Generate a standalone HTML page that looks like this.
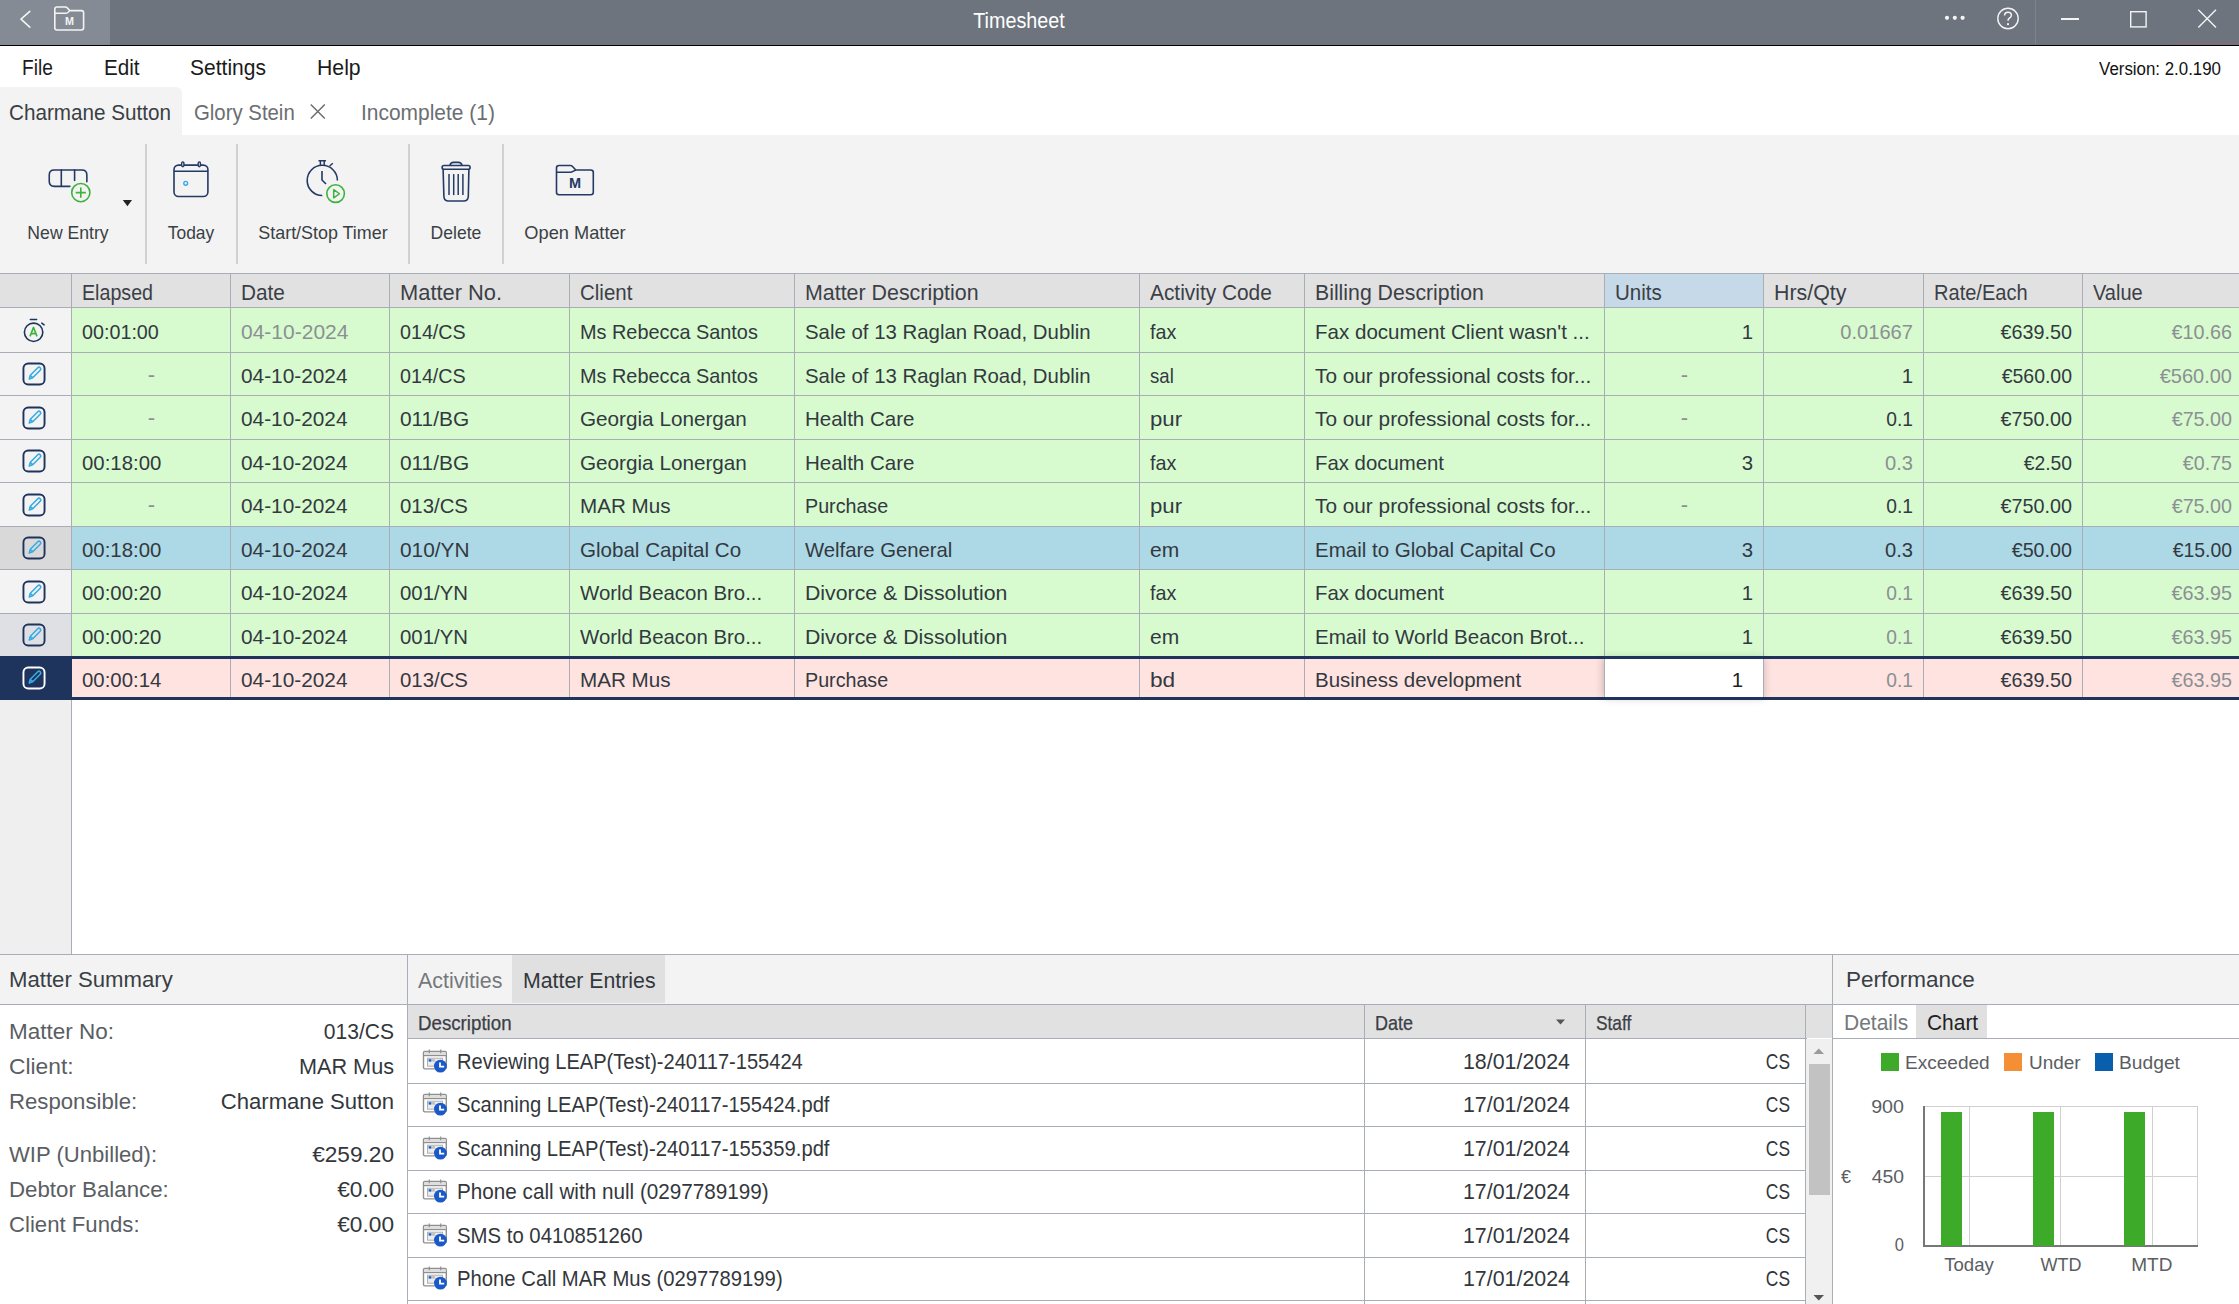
<!DOCTYPE html>
<html><head><meta charset="utf-8"><title>Timesheet</title>
<style>
html,body{margin:0;padding:0;}
body{width:2239px;height:1304px;overflow:hidden;position:relative;background:#fff;font-family:'Liberation Sans', sans-serif;}
div,svg{box-sizing:border-box;}
</style></head><body>
<div style="position:absolute;left:0px;top:0px;width:2239px;height:45px;background:#6d747e;"></div>
<div style="position:absolute;left:0px;top:0px;width:110px;height:45px;background:#858b94;"></div>
<div style="position:absolute;left:0px;top:45px;width:2239px;height:1px;background:#000;"></div>
<svg style="position:absolute;left:14px;top:4px;" width="24" height="32" viewBox="0 0 24 32" fill="none"><path d="M15.8 7.3 L7 15.2 L15.8 23.2" stroke="#f4f4f4" stroke-width="1.6" stroke-linecap="round" stroke-linejoin="round"/></svg>
<svg style="position:absolute;left:50px;top:2px;" width="40" height="34" viewBox="0 0 40 34" fill="none"><path d="M4.8 7.2 Q4.8 5 7 5 L15.5 5 Q16.5 5 17.2 5.7 L19.7 8.6 L31.4 8.6 Q33.6 8.6 33.6 10.8 L33.6 25.8 Q33.6 28 31.4 28 L7 28 Q4.8 28 4.8 25.8 Z" stroke="#f4f4f4" stroke-width="1.6" stroke-linejoin="round"/><path d="M4.8 11.3 L15.5 11.3 Q17 11.3 18.2 10.2 L19.7 8.6" stroke="#f4f4f4" stroke-width="1.4"/><text x="19.5" y="22.7" fill="#f4f4f4" font-family="Liberation Sans" font-weight="bold" font-size="10.8" text-anchor="middle">M</text></svg>
<div style="position:absolute;left:419.0px;width:1200px;text-align:center;top:9.54px;font-size:21.80232558139535px;line-height:21.80232558139535px;color:#ffffff;font-weight:normal;white-space:pre;transform:scaleX(0.9062);transform-origin:center center;">Timesheet</div>
<svg style="position:absolute;left:1940px;top:10px;" width="30" height="16" viewBox="0 0 30 16" fill="none"><circle cx="7.0" cy="7.8" r="2.1" fill="#f4f4f4"/><circle cx="14.8" cy="7.8" r="2.1" fill="#f4f4f4"/><circle cx="22.6" cy="7.8" r="2.1" fill="#f4f4f4"/></svg>
<svg style="position:absolute;left:1994px;top:5px;" width="28" height="28" viewBox="0 0 28 28" fill="none"><circle cx="14" cy="13.5" r="10.2" stroke="#f4f4f4" stroke-width="1.4"/><path d="M10.6 10.6 Q10.6 7.2 14 7.2 Q17.4 7.2 17.4 10.3 Q17.4 12.3 15.3 13.3 Q14 13.9 14 15.8" stroke="#f4f4f4" stroke-width="1.5" fill="none"/><circle cx="14" cy="19.2" r="1.1" fill="#f4f4f4"/></svg>
<div style="position:absolute;left:2035px;top:0px;width:1px;height:44px;background:#7d848d;"></div>
<div style="position:absolute;left:2173px;top:43px;width:66px;height:1px;background:#8c6a74;"></div>
<div style="position:absolute;left:2061px;top:18.4px;width:17.5px;height:1.3px;background:#f4f4f4;"></div>
<svg style="position:absolute;left:2126px;top:6px;" width="28" height="28" viewBox="0 0 28 28" fill="none"><rect x="4.7" y="5.7" width="15.4" height="15.2" stroke="#f4f4f4" stroke-width="1.4"/></svg>
<svg style="position:absolute;left:2193px;top:4px;" width="30" height="30" viewBox="0 0 30 30" fill="none"><path d="M5.3 5.7 L23 23.4 M23 5.7 L5.3 23.4" stroke="#f4f4f4" stroke-width="1.4"/></svg>
<div style="position:absolute;left:22px;top:56.64px;font-size:21.80232558139535px;line-height:21.80232558139535px;color:#1b1b1b;font-weight:normal;white-space:pre;transform:scaleX(0.8789);transform-origin:left center;">File</div>
<div style="position:absolute;left:104px;top:56.64px;font-size:21.80232558139535px;line-height:21.80232558139535px;color:#1b1b1b;font-weight:normal;white-space:pre;transform:scaleX(0.9476);transform-origin:left center;">Edit</div>
<div style="position:absolute;left:190px;top:56.64px;font-size:21.80232558139535px;line-height:21.80232558139535px;color:#1b1b1b;font-weight:normal;white-space:pre;transform:scaleX(0.9653);transform-origin:left center;">Settings</div>
<div style="position:absolute;left:317px;top:56.64px;font-size:21.80232558139535px;line-height:21.80232558139535px;color:#1b1b1b;font-weight:normal;white-space:pre;transform:scaleX(0.9745);transform-origin:left center;">Help</div>
<div style="position:absolute;left:1021px;width:1200px;text-align:right;top:59.83px;font-size:18.750000000000004px;line-height:18.750000000000004px;color:#111;font-weight:normal;white-space:pre;transform:scaleX(0.8996);transform-origin:right center;">Version: 2.0.190</div>
<div style="position:absolute;left:0px;top:87px;width:182px;height:48px;background:#f3f3f3;border-top-right-radius:6px;"></div>
<div style="position:absolute;left:8.5px;top:101.84px;font-size:21.22093023255814px;line-height:21.22093023255814px;color:#3a3f45;font-weight:normal;white-space:pre;transform:scaleX(0.9737);transform-origin:left center;">Charmane Sutton</div>
<div style="position:absolute;left:194px;top:101.84px;font-size:21.22093023255814px;line-height:21.22093023255814px;color:#6b6e72;font-weight:normal;white-space:pre;transform:scaleX(0.9597);transform-origin:left center;">Glory Stein</div>
<svg style="position:absolute;left:306px;top:100px;" width="24" height="24" viewBox="0 0 24 24" fill="none"><path d="M4.8 4.5 L18.8 18.5 M18.8 4.5 L4.8 18.5" stroke="#6b6e72" stroke-width="1.5"/></svg>
<div style="position:absolute;left:361px;top:101.84px;font-size:21.22093023255814px;line-height:21.22093023255814px;color:#6b6e72;font-weight:normal;white-space:pre;transform:scaleX(0.9872);transform-origin:left center;">Incomplete (1)</div>
<div style="position:absolute;left:0px;top:135px;width:2239px;height:138px;background:#f3f3f3;"></div>
<div style="position:absolute;left:145px;top:144px;width:2px;height:120px;background:#d1d1d1;"></div>
<div style="position:absolute;left:236px;top:144px;width:2px;height:120px;background:#d1d1d1;"></div>
<div style="position:absolute;left:408px;top:144px;width:2px;height:120px;background:#d1d1d1;"></div>
<div style="position:absolute;left:502px;top:144px;width:2px;height:120px;background:#d1d1d1;"></div>
<div style="position:absolute;left:-82.5px;width:300px;text-align:center;top:222.76px;font-size:19.186046511627907px;line-height:19.186046511627907px;color:#3a3f45;font-weight:normal;white-space:pre;transform:scaleX(0.9190);transform-origin:center center;">New Entry</div>
<div style="position:absolute;left:41.0px;width:300px;text-align:center;top:222.76px;font-size:19.186046511627907px;line-height:19.186046511627907px;color:#3a3f45;font-weight:normal;white-space:pre;transform:scaleX(0.9086);transform-origin:center center;">Today</div>
<div style="position:absolute;left:172.5px;width:300px;text-align:center;top:222.76px;font-size:19.186046511627907px;line-height:19.186046511627907px;color:#3a3f45;font-weight:normal;white-space:pre;transform:scaleX(0.9344);transform-origin:center center;">Start/Stop Timer</div>
<div style="position:absolute;left:305.5px;width:300px;text-align:center;top:222.76px;font-size:19.186046511627907px;line-height:19.186046511627907px;color:#3a3f45;font-weight:normal;white-space:pre;transform:scaleX(0.9160);transform-origin:center center;">Delete</div>
<div style="position:absolute;left:424.5px;width:300px;text-align:center;top:222.76px;font-size:19.186046511627907px;line-height:19.186046511627907px;color:#3a3f45;font-weight:normal;white-space:pre;transform:scaleX(0.9513);transform-origin:center center;">Open Matter</div>
<svg style="position:absolute;left:44px;top:164px;" width="52" height="44" viewBox="0 0 52 44" fill="none"><path d="M25.9 22.35 L10.25 22.35 Q5.25 22.35 5.25 17.35 L5.25 10.95 Q5.25 5.95 10.25 5.95 L37.85 5.95 Q42.85 5.95 42.85 10.95 L42.85 17.7" stroke="#243a64" stroke-width="1.6" fill="none" stroke-linecap="round"/><path d="M17.3 5.95 L17.3 22.35 M30.6 5.95 L30.6 16.4" stroke="#243a64" stroke-width="1.6" stroke-linecap="round"/><circle cx="36.8" cy="28.6" r="9.1" stroke="#3cb33c" stroke-width="1.6" fill="none"/><path d="M36.8 23.6 L36.8 33.7 M31.7 28.6 L41.9 28.6" stroke="#3cb33c" stroke-width="1.6"/></svg>
<svg style="position:absolute;left:120px;top:197px;" width="16" height="12" viewBox="0 0 16 12" fill="none"><path d="M2.8 3 L12 3 L7.4 9.2 Z" fill="#222"/></svg>
<svg style="position:absolute;left:168px;top:156px;" width="46" height="46" viewBox="0 0 46 46" fill="none"><rect x="6" y="9.1" width="33.9" height="31.4" rx="4.5" stroke="#243a64" stroke-width="1.6"/><path d="M6 15.2 L39.9 15.2" stroke="#243a64" stroke-width="1.6"/><rect x="13.7" y="5.9" width="2.2" height="4.8" rx="1.1" stroke="#243a64" stroke-width="1.4" fill="#f3f3f3"/><rect x="30.2" y="5.9" width="2.2" height="4.8" rx="1.1" stroke="#243a64" stroke-width="1.4" fill="#f3f3f3"/><circle cx="17.7" cy="27.3" r="1.9" stroke="#3aa8e8" stroke-width="1.4"/></svg>
<svg style="position:absolute;left:300px;top:154px;" width="52" height="52" viewBox="0 0 52 52" fill="none"><path d="M37.4 26.4 A15.1 15.1 0 1 0 22.3 41.5" stroke="#243a64" stroke-width="1.6" fill="none"/><path d="M18.5 6.8 L26 6.8 M20.4 6.8 L20.4 11.2 M24.2 6.8 L24.2 11.2" stroke="#243a64" stroke-width="1.5"/><path d="M29.6 12 L32.8 9.2" stroke="#243a64" stroke-width="1.5"/><path d="M22 17 L22 26 L26 30" stroke="#243a64" stroke-width="1.6" fill="none"/><circle cx="35.6" cy="39.6" r="8.8" stroke="#3cb33c" stroke-width="1.6" fill="none"/><path d="M33.7 35.7 L39.5 39.75 L33.7 43.8 Z" stroke="#3cb33c" stroke-width="1.5" fill="none" stroke-linejoin="round"/></svg>
<svg style="position:absolute;left:434px;top:154px;" width="46" height="52" viewBox="0 0 46 52" fill="none"><rect x="8.1" y="11.5" width="28" height="3.8" rx="1.9" stroke="#243a64" stroke-width="1.6"/><path d="M15.9 11.5 Q16.6 8.4 19.6 8.4 L24.4 8.4 Q27.3 8.4 28 11.5" stroke="#243a64" stroke-width="1.6" fill="none"/><path d="M9.1 15.3 L9.9 42.5 Q10.2 47 14.5 47 L29.7 47 Q34 47 34.3 42.5 L34.9 15.3" stroke="#243a64" stroke-width="1.6" fill="none"/><path d="M15 20.1 L15 41.1" stroke="#243a64" stroke-width="1.5"/><path d="M19.7 20.1 L19.7 41.1" stroke="#243a64" stroke-width="1.5"/><path d="M24.2 20.1 L24.2 41.1" stroke="#243a64" stroke-width="1.5"/><path d="M28.9 20.1 L28.9 41.1" stroke="#243a64" stroke-width="1.5"/></svg>
<svg style="position:absolute;left:550px;top:158px;" width="50" height="44" viewBox="0 0 50 44" fill="none"><path d="M6.5 10 Q6.5 7.5 9 7.5 L20.5 7.5 Q21.5 7.5 22.3 8.3 L25.8 12 L40.8 12 Q43.3 12 43.3 14.5 L43.3 34.2 Q43.3 36.7 40.8 36.7 L9 36.7 Q6.5 36.7 6.5 34.2 Z" stroke="#243a64" stroke-width="1.6" stroke-linejoin="round" fill="none"/><path d="M6.5 14.3 L20 14.3 Q21.8 14.3 23 13.4 L25.8 12" stroke="#243a64" stroke-width="1.5" fill="none"/><text x="25" y="30.4" fill="#243a64" font-family="Liberation Sans" font-weight="bold" font-size="14.5" text-anchor="middle">M</text></svg>
<div style="position:absolute;left:0px;top:273px;width:2239px;height:1px;background:#a9adb5;"></div>
<div style="position:absolute;left:0px;top:274px;width:2239px;height:33px;background:#e1e1e1;"></div>
<div style="position:absolute;left:1605px;top:274px;width:158px;height:33px;background:#c5d9e8;"></div>
<div style="position:absolute;left:0px;top:307px;width:2239px;height:1px;background:#a9adb5;"></div>
<div style="position:absolute;left:82px;top:282.05px;font-size:21.2px;line-height:21.2px;color:#3b4046;font-weight:normal;white-space:pre;transform:scaleX(0.9275);transform-origin:left center;">Elapsed</div>
<div style="position:absolute;left:241px;top:282.05px;font-size:21.2px;line-height:21.2px;color:#3b4046;font-weight:normal;white-space:pre;transform:scaleX(0.9802);transform-origin:left center;">Date</div>
<div style="position:absolute;left:400px;top:282.05px;font-size:21.2px;line-height:21.2px;color:#3b4046;font-weight:normal;white-space:pre;transform:scaleX(1.0325);transform-origin:left center;">Matter No.</div>
<div style="position:absolute;left:580px;top:282.05px;font-size:21.2px;line-height:21.2px;color:#3b4046;font-weight:normal;white-space:pre;transform:scaleX(0.9663);transform-origin:left center;">Client</div>
<div style="position:absolute;left:805px;top:282.05px;font-size:21.2px;line-height:21.2px;color:#3b4046;font-weight:normal;white-space:pre;transform:scaleX(1.0096);transform-origin:left center;">Matter Description</div>
<div style="position:absolute;left:1150px;top:282.05px;font-size:21.2px;line-height:21.2px;color:#3b4046;font-weight:normal;white-space:pre;transform:scaleX(0.9854);transform-origin:left center;">Activity Code</div>
<div style="position:absolute;left:1315px;top:282.05px;font-size:21.2px;line-height:21.2px;color:#3b4046;font-weight:normal;white-space:pre;transform:scaleX(1.0032);transform-origin:left center;">Billing Description</div>
<div style="position:absolute;left:1615px;top:282.05px;font-size:21.2px;line-height:21.2px;color:#3b4046;font-weight:normal;white-space:pre;transform:scaleX(0.9698);transform-origin:left center;">Units</div>
<div style="position:absolute;left:1774px;top:282.05px;font-size:21.2px;line-height:21.2px;color:#3b4046;font-weight:normal;white-space:pre;transform:scaleX(1.0081);transform-origin:left center;">Hrs/Qty</div>
<div style="position:absolute;left:1934px;top:282.05px;font-size:21.2px;line-height:21.2px;color:#3b4046;font-weight:normal;white-space:pre;transform:scaleX(0.9467);transform-origin:left center;">Rate/Each</div>
<div style="position:absolute;left:2093px;top:282.05px;font-size:21.2px;line-height:21.2px;color:#3b4046;font-weight:normal;white-space:pre;transform:scaleX(0.9430);transform-origin:left center;">Value</div>
<div style="position:absolute;left:0px;top:308px;width:71px;height:646px;background:#efefef;"></div>
<div style="position:absolute;left:0px;top:308px;width:71px;height:44px;background:#f3f3f3;"></div>
<div style="position:absolute;left:72px;top:308px;width:2167px;height:44px;background:#d7fbcf;"></div>
<div style="position:absolute;left:0px;top:352px;width:2239px;height:1px;background:#a9adb5;"></div>
<svg style="position:absolute;left:20.200000000000003px;top:317.5px;" width="28" height="28" viewBox="0 0 28 28" fill="none"><circle cx="13.6" cy="14.3" r="9.2" stroke="#1e345c" stroke-width="1.6"/><path d="M10.4 1.5 L16.6 1.5" stroke="#1e345c" stroke-width="1.6" stroke-linecap="round"/><path d="M21.8 5.1 L24.1 6.9" stroke="#1e345c" stroke-width="1.5" stroke-linecap="round"/><path d="M10 18.4 L13.5 9.4 L17 18.4 M11.1 15.6 L15.9 15.6" stroke="#3cb33c" stroke-width="1.6" fill="none" stroke-linejoin="round"/></svg>
<div style="position:absolute;left:82px;top:320.82px;font-size:21.0px;line-height:21.0px;color:#333940;font-weight:normal;white-space:pre;transform:scaleX(0.9398);transform-origin:left center;">00:01:00</div>
<div style="position:absolute;left:241px;top:320.82px;font-size:21.0px;line-height:21.0px;color:#8c8f93;font-weight:normal;white-space:pre;">04-10-2024</div>
<div style="position:absolute;left:400px;top:320.82px;font-size:21.0px;line-height:21.0px;color:#333940;font-weight:normal;white-space:pre;transform:scaleX(0.9382);transform-origin:left center;">014/CS</div>
<div style="position:absolute;left:580px;top:320.82px;font-size:21.0px;line-height:21.0px;color:#333940;font-weight:normal;white-space:pre;transform:scaleX(0.9462);transform-origin:left center;">Ms Rebecca Santos</div>
<div style="position:absolute;left:805px;top:320.82px;font-size:21.0px;line-height:21.0px;color:#333940;font-weight:normal;white-space:pre;transform:scaleX(0.9710);transform-origin:left center;">Sale of 13 Raglan Road, Dublin</div>
<div style="position:absolute;left:1150px;top:320.82px;font-size:21.0px;line-height:21.0px;color:#333940;font-weight:normal;white-space:pre;transform:scaleX(0.9387);transform-origin:left center;">fax</div>
<div style="position:absolute;left:1315px;top:320.82px;font-size:21.0px;line-height:21.0px;color:#333940;font-weight:normal;white-space:pre;transform:scaleX(0.9788);transform-origin:left center;">Fax document Client wasn't ...</div>
<div style="position:absolute;left:1353.4px;width:400px;text-align:right;top:320.82px;font-size:21.0px;line-height:21.0px;color:#333940;font-weight:normal;white-space:pre;transform:scaleX(0.9700);transform-origin:right center;">1</div>
<div style="position:absolute;left:1513.4px;width:400px;text-align:right;top:320.82px;font-size:21.0px;line-height:21.0px;color:#8c8f93;font-weight:normal;white-space:pre;transform:scaleX(0.9579);transform-origin:right center;">0.01667</div>
<div style="position:absolute;left:1672.4px;width:400px;text-align:right;top:320.82px;font-size:21.0px;line-height:21.0px;color:#333940;font-weight:normal;white-space:pre;transform:scaleX(0.9414);transform-origin:right center;">€639.50</div>
<div style="position:absolute;left:1832.3000000000002px;width:400px;text-align:right;top:320.82px;font-size:21.0px;line-height:21.0px;color:#8c8f93;font-weight:normal;white-space:pre;transform:scaleX(0.9410);transform-origin:right center;">€10.66</div>
<div style="position:absolute;left:0px;top:353px;width:71px;height:42px;background:#f3f3f3;"></div>
<div style="position:absolute;left:72px;top:353px;width:2167px;height:42px;background:#d7fbcf;"></div>
<div style="position:absolute;left:0px;top:395px;width:2239px;height:1px;background:#a9adb5;"></div>
<svg style="position:absolute;left:20.200000000000003px;top:360.1px;" width="28" height="28" viewBox="0 0 28 28" fill="none"><rect x="3.45" y="3.45" width="21.1" height="21.1" rx="4.8" stroke="#1e345c" stroke-width="1.9"/><path d="M9.3 19 L10.3 15.3 L17.8 7.8 Q19 6.6 20.2 7.8 Q21.4 9 20.2 10.2 L12.7 17.7 Z M10.3 15.3 L12.7 17.7" stroke="#36ace4" stroke-width="1.6" stroke-linejoin="round" fill="none"/></svg>
<div style="position:absolute;left:101.5px;width:100px;text-align:center;top:363.98px;font-size:22px;line-height:22px;color:#8c8f93;font-weight:normal;white-space:pre;">-</div>
<div style="position:absolute;left:241px;top:364.82px;font-size:21.0px;line-height:21.0px;color:#333940;font-weight:normal;white-space:pre;transform:scaleX(0.9914);transform-origin:left center;">04-10-2024</div>
<div style="position:absolute;left:400px;top:364.82px;font-size:21.0px;line-height:21.0px;color:#333940;font-weight:normal;white-space:pre;transform:scaleX(0.9382);transform-origin:left center;">014/CS</div>
<div style="position:absolute;left:580px;top:364.82px;font-size:21.0px;line-height:21.0px;color:#333940;font-weight:normal;white-space:pre;transform:scaleX(0.9462);transform-origin:left center;">Ms Rebecca Santos</div>
<div style="position:absolute;left:805px;top:364.82px;font-size:21.0px;line-height:21.0px;color:#333940;font-weight:normal;white-space:pre;transform:scaleX(0.9710);transform-origin:left center;">Sale of 13 Raglan Road, Dublin</div>
<div style="position:absolute;left:1150px;top:364.82px;font-size:21.0px;line-height:21.0px;color:#333940;font-weight:normal;white-space:pre;transform:scaleX(0.8849);transform-origin:left center;">sal</div>
<div style="position:absolute;left:1315px;top:364.82px;font-size:21.0px;line-height:21.0px;color:#333940;font-weight:normal;white-space:pre;transform:scaleX(0.9902);transform-origin:left center;">To our professional costs for...</div>
<div style="position:absolute;left:1634.5px;width:100px;text-align:center;top:363.98px;font-size:22px;line-height:22px;color:#8c8f93;font-weight:normal;white-space:pre;">-</div>
<div style="position:absolute;left:1513.4px;width:400px;text-align:right;top:364.82px;font-size:21.0px;line-height:21.0px;color:#333940;font-weight:normal;white-space:pre;transform:scaleX(0.9700);transform-origin:right center;">1</div>
<div style="position:absolute;left:1672.4px;width:400px;text-align:right;top:364.82px;font-size:21.0px;line-height:21.0px;color:#333940;font-weight:normal;white-space:pre;transform:scaleX(0.9256);transform-origin:right center;">€560.00</div>
<div style="position:absolute;left:1832.3000000000002px;width:400px;text-align:right;top:364.82px;font-size:21.0px;line-height:21.0px;color:#8c8f93;font-weight:normal;white-space:pre;transform:scaleX(0.9521);transform-origin:right center;">€560.00</div>
<div style="position:absolute;left:0px;top:396px;width:71px;height:43px;background:#f3f3f3;"></div>
<div style="position:absolute;left:72px;top:396px;width:2167px;height:43px;background:#d7fbcf;"></div>
<div style="position:absolute;left:0px;top:439px;width:2239px;height:1px;background:#a9adb5;"></div>
<svg style="position:absolute;left:20.200000000000003px;top:403.6px;" width="28" height="28" viewBox="0 0 28 28" fill="none"><rect x="3.45" y="3.45" width="21.1" height="21.1" rx="4.8" stroke="#1e345c" stroke-width="1.9"/><path d="M9.3 19 L10.3 15.3 L17.8 7.8 Q19 6.6 20.2 7.8 Q21.4 9 20.2 10.2 L12.7 17.7 Z M10.3 15.3 L12.7 17.7" stroke="#36ace4" stroke-width="1.6" stroke-linejoin="round" fill="none"/></svg>
<div style="position:absolute;left:101.5px;width:100px;text-align:center;top:407.48px;font-size:22px;line-height:22px;color:#8c8f93;font-weight:normal;white-space:pre;">-</div>
<div style="position:absolute;left:241px;top:408.32px;font-size:21.0px;line-height:21.0px;color:#333940;font-weight:normal;white-space:pre;transform:scaleX(0.9914);transform-origin:left center;">04-10-2024</div>
<div style="position:absolute;left:400px;top:408.32px;font-size:21.0px;line-height:21.0px;color:#333940;font-weight:normal;white-space:pre;transform:scaleX(0.9917);transform-origin:left center;">011/BG</div>
<div style="position:absolute;left:580px;top:408.32px;font-size:21.0px;line-height:21.0px;color:#333940;font-weight:normal;white-space:pre;transform:scaleX(0.9856);transform-origin:left center;">Georgia Lonergan</div>
<div style="position:absolute;left:805px;top:408.32px;font-size:21.0px;line-height:21.0px;color:#333940;font-weight:normal;white-space:pre;transform:scaleX(0.9765);transform-origin:left center;">Health Care</div>
<div style="position:absolute;left:1150px;top:408.32px;font-size:21.0px;line-height:21.0px;color:#333940;font-weight:normal;white-space:pre;transform:scaleX(1.0566);transform-origin:left center;">pur</div>
<div style="position:absolute;left:1315px;top:408.32px;font-size:21.0px;line-height:21.0px;color:#333940;font-weight:normal;white-space:pre;transform:scaleX(0.9902);transform-origin:left center;">To our professional costs for...</div>
<div style="position:absolute;left:1634.5px;width:100px;text-align:center;top:407.48px;font-size:22px;line-height:22px;color:#8c8f93;font-weight:normal;white-space:pre;">-</div>
<div style="position:absolute;left:1513.4px;width:400px;text-align:right;top:408.32px;font-size:21.0px;line-height:21.0px;color:#333940;font-weight:normal;white-space:pre;transform:scaleX(0.9136);transform-origin:right center;">0.1</div>
<div style="position:absolute;left:1672.4px;width:400px;text-align:right;top:408.32px;font-size:21.0px;line-height:21.0px;color:#333940;font-weight:normal;white-space:pre;transform:scaleX(0.9414);transform-origin:right center;">€750.00</div>
<div style="position:absolute;left:1832.3000000000002px;width:400px;text-align:right;top:408.32px;font-size:21.0px;line-height:21.0px;color:#8c8f93;font-weight:normal;white-space:pre;transform:scaleX(0.9391);transform-origin:right center;">€75.00</div>
<div style="position:absolute;left:0px;top:440px;width:71px;height:42px;background:#f3f3f3;"></div>
<div style="position:absolute;left:72px;top:440px;width:2167px;height:42px;background:#d7fbcf;"></div>
<div style="position:absolute;left:0px;top:482px;width:2239px;height:1px;background:#a9adb5;"></div>
<svg style="position:absolute;left:20.200000000000003px;top:447.1px;" width="28" height="28" viewBox="0 0 28 28" fill="none"><rect x="3.45" y="3.45" width="21.1" height="21.1" rx="4.8" stroke="#1e345c" stroke-width="1.9"/><path d="M9.3 19 L10.3 15.3 L17.8 7.8 Q19 6.6 20.2 7.8 Q21.4 9 20.2 10.2 L12.7 17.7 Z M10.3 15.3 L12.7 17.7" stroke="#36ace4" stroke-width="1.6" stroke-linejoin="round" fill="none"/></svg>
<div style="position:absolute;left:82px;top:451.82px;font-size:21.0px;line-height:21.0px;color:#333940;font-weight:normal;white-space:pre;transform:scaleX(0.9700);transform-origin:left center;">00:18:00</div>
<div style="position:absolute;left:241px;top:451.82px;font-size:21.0px;line-height:21.0px;color:#333940;font-weight:normal;white-space:pre;transform:scaleX(0.9914);transform-origin:left center;">04-10-2024</div>
<div style="position:absolute;left:400px;top:451.82px;font-size:21.0px;line-height:21.0px;color:#333940;font-weight:normal;white-space:pre;transform:scaleX(0.9917);transform-origin:left center;">011/BG</div>
<div style="position:absolute;left:580px;top:451.82px;font-size:21.0px;line-height:21.0px;color:#333940;font-weight:normal;white-space:pre;transform:scaleX(0.9856);transform-origin:left center;">Georgia Lonergan</div>
<div style="position:absolute;left:805px;top:451.82px;font-size:21.0px;line-height:21.0px;color:#333940;font-weight:normal;white-space:pre;transform:scaleX(0.9765);transform-origin:left center;">Health Care</div>
<div style="position:absolute;left:1150px;top:451.82px;font-size:21.0px;line-height:21.0px;color:#333940;font-weight:normal;white-space:pre;transform:scaleX(0.9387);transform-origin:left center;">fax</div>
<div style="position:absolute;left:1315px;top:451.82px;font-size:21.0px;line-height:21.0px;color:#333940;font-weight:normal;white-space:pre;transform:scaleX(0.9693);transform-origin:left center;">Fax document</div>
<div style="position:absolute;left:1353.4px;width:400px;text-align:right;top:451.82px;font-size:21.0px;line-height:21.0px;color:#333940;font-weight:normal;white-space:pre;transform:scaleX(0.9700);transform-origin:right center;">3</div>
<div style="position:absolute;left:1513.4px;width:400px;text-align:right;top:451.82px;font-size:21.0px;line-height:21.0px;color:#8c8f93;font-weight:normal;white-space:pre;transform:scaleX(0.9601);transform-origin:right center;">0.3</div>
<div style="position:absolute;left:1672.4px;width:400px;text-align:right;top:451.82px;font-size:21.0px;line-height:21.0px;color:#333940;font-weight:normal;white-space:pre;transform:scaleX(0.9188);transform-origin:right center;">€2.50</div>
<div style="position:absolute;left:1832.3000000000002px;width:400px;text-align:right;top:451.82px;font-size:21.0px;line-height:21.0px;color:#8c8f93;font-weight:normal;white-space:pre;transform:scaleX(0.9359);transform-origin:right center;">€0.75</div>
<div style="position:absolute;left:0px;top:483px;width:71px;height:43px;background:#f3f3f3;"></div>
<div style="position:absolute;left:72px;top:483px;width:2167px;height:43px;background:#d7fbcf;"></div>
<div style="position:absolute;left:0px;top:526px;width:2239px;height:1px;background:#a9adb5;"></div>
<svg style="position:absolute;left:20.200000000000003px;top:490.6px;" width="28" height="28" viewBox="0 0 28 28" fill="none"><rect x="3.45" y="3.45" width="21.1" height="21.1" rx="4.8" stroke="#1e345c" stroke-width="1.9"/><path d="M9.3 19 L10.3 15.3 L17.8 7.8 Q19 6.6 20.2 7.8 Q21.4 9 20.2 10.2 L12.7 17.7 Z M10.3 15.3 L12.7 17.7" stroke="#36ace4" stroke-width="1.6" stroke-linejoin="round" fill="none"/></svg>
<div style="position:absolute;left:101.5px;width:100px;text-align:center;top:494.48px;font-size:22px;line-height:22px;color:#8c8f93;font-weight:normal;white-space:pre;">-</div>
<div style="position:absolute;left:241px;top:495.32px;font-size:21.0px;line-height:21.0px;color:#333940;font-weight:normal;white-space:pre;transform:scaleX(0.9914);transform-origin:left center;">04-10-2024</div>
<div style="position:absolute;left:400px;top:495.32px;font-size:21.0px;line-height:21.0px;color:#333940;font-weight:normal;white-space:pre;transform:scaleX(0.9700);transform-origin:left center;">013/CS</div>
<div style="position:absolute;left:580px;top:495.32px;font-size:21.0px;line-height:21.0px;color:#333940;font-weight:normal;white-space:pre;transform:scaleX(0.9821);transform-origin:left center;">MAR Mus</div>
<div style="position:absolute;left:805px;top:495.32px;font-size:21.0px;line-height:21.0px;color:#333940;font-weight:normal;white-space:pre;transform:scaleX(0.9374);transform-origin:left center;">Purchase</div>
<div style="position:absolute;left:1150px;top:495.32px;font-size:21.0px;line-height:21.0px;color:#333940;font-weight:normal;white-space:pre;transform:scaleX(1.0566);transform-origin:left center;">pur</div>
<div style="position:absolute;left:1315px;top:495.32px;font-size:21.0px;line-height:21.0px;color:#333940;font-weight:normal;white-space:pre;transform:scaleX(0.9902);transform-origin:left center;">To our professional costs for...</div>
<div style="position:absolute;left:1634.5px;width:100px;text-align:center;top:494.48px;font-size:22px;line-height:22px;color:#8c8f93;font-weight:normal;white-space:pre;">-</div>
<div style="position:absolute;left:1513.4px;width:400px;text-align:right;top:495.32px;font-size:21.0px;line-height:21.0px;color:#333940;font-weight:normal;white-space:pre;transform:scaleX(0.9136);transform-origin:right center;">0.1</div>
<div style="position:absolute;left:1672.4px;width:400px;text-align:right;top:495.32px;font-size:21.0px;line-height:21.0px;color:#333940;font-weight:normal;white-space:pre;transform:scaleX(0.9414);transform-origin:right center;">€750.00</div>
<div style="position:absolute;left:1832.3000000000002px;width:400px;text-align:right;top:495.32px;font-size:21.0px;line-height:21.0px;color:#8c8f93;font-weight:normal;white-space:pre;transform:scaleX(0.9391);transform-origin:right center;">€75.00</div>
<div style="position:absolute;left:0px;top:527px;width:71px;height:42px;background:#d9d9d9;"></div>
<div style="position:absolute;left:72px;top:527px;width:2167px;height:42px;background:#add8e6;"></div>
<div style="position:absolute;left:0px;top:569px;width:2239px;height:1px;background:#a9adb5;"></div>
<svg style="position:absolute;left:20.200000000000003px;top:534.1px;" width="28" height="28" viewBox="0 0 28 28" fill="none"><rect x="3.45" y="3.45" width="21.1" height="21.1" rx="4.8" stroke="#1e345c" stroke-width="1.9"/><path d="M9.3 19 L10.3 15.3 L17.8 7.8 Q19 6.6 20.2 7.8 Q21.4 9 20.2 10.2 L12.7 17.7 Z M10.3 15.3 L12.7 17.7" stroke="#36ace4" stroke-width="1.6" stroke-linejoin="round" fill="none"/></svg>
<div style="position:absolute;left:82px;top:538.82px;font-size:21.0px;line-height:21.0px;color:#333940;font-weight:normal;white-space:pre;transform:scaleX(0.9700);transform-origin:left center;">00:18:00</div>
<div style="position:absolute;left:241px;top:538.82px;font-size:21.0px;line-height:21.0px;color:#333940;font-weight:normal;white-space:pre;transform:scaleX(0.9914);transform-origin:left center;">04-10-2024</div>
<div style="position:absolute;left:400px;top:538.82px;font-size:21.0px;line-height:21.0px;color:#333940;font-weight:normal;white-space:pre;transform:scaleX(0.9910);transform-origin:left center;">010/YN</div>
<div style="position:absolute;left:580px;top:538.82px;font-size:21.0px;line-height:21.0px;color:#333940;font-weight:normal;white-space:pre;transform:scaleX(0.9789);transform-origin:left center;">Global Capital Co</div>
<div style="position:absolute;left:805px;top:538.82px;font-size:21.0px;line-height:21.0px;color:#333940;font-weight:normal;white-space:pre;transform:scaleX(0.9656);transform-origin:left center;">Welfare General</div>
<div style="position:absolute;left:1150px;top:538.82px;font-size:21.0px;line-height:21.0px;color:#333940;font-weight:normal;white-space:pre;">em</div>
<div style="position:absolute;left:1315px;top:538.82px;font-size:21.0px;line-height:21.0px;color:#333940;font-weight:normal;white-space:pre;transform:scaleX(0.9769);transform-origin:left center;">Email to Global Capital Co</div>
<div style="position:absolute;left:1353.4px;width:400px;text-align:right;top:538.82px;font-size:21.0px;line-height:21.0px;color:#333940;font-weight:normal;white-space:pre;transform:scaleX(0.9700);transform-origin:right center;">3</div>
<div style="position:absolute;left:1513.4px;width:400px;text-align:right;top:538.82px;font-size:21.0px;line-height:21.0px;color:#333940;font-weight:normal;white-space:pre;transform:scaleX(0.9601);transform-origin:right center;">0.3</div>
<div style="position:absolute;left:1672.4px;width:400px;text-align:right;top:538.82px;font-size:21.0px;line-height:21.0px;color:#333940;font-weight:normal;white-space:pre;transform:scaleX(0.9393);transform-origin:right center;">€50.00</div>
<div style="position:absolute;left:1832.3000000000002px;width:400px;text-align:right;top:538.82px;font-size:21.0px;line-height:21.0px;color:#333940;font-weight:normal;white-space:pre;transform:scaleX(0.9235);transform-origin:right center;">€15.00</div>
<div style="position:absolute;left:0px;top:570px;width:71px;height:43px;background:#f3f3f3;"></div>
<div style="position:absolute;left:72px;top:570px;width:2167px;height:43px;background:#d7fbcf;"></div>
<div style="position:absolute;left:0px;top:613px;width:2239px;height:1px;background:#a9adb5;"></div>
<svg style="position:absolute;left:20.200000000000003px;top:577.6px;" width="28" height="28" viewBox="0 0 28 28" fill="none"><rect x="3.45" y="3.45" width="21.1" height="21.1" rx="4.8" stroke="#1e345c" stroke-width="1.9"/><path d="M9.3 19 L10.3 15.3 L17.8 7.8 Q19 6.6 20.2 7.8 Q21.4 9 20.2 10.2 L12.7 17.7 Z M10.3 15.3 L12.7 17.7" stroke="#36ace4" stroke-width="1.6" stroke-linejoin="round" fill="none"/></svg>
<div style="position:absolute;left:82px;top:582.32px;font-size:21.0px;line-height:21.0px;color:#333940;font-weight:normal;white-space:pre;transform:scaleX(0.9700);transform-origin:left center;">00:00:20</div>
<div style="position:absolute;left:241px;top:582.32px;font-size:21.0px;line-height:21.0px;color:#333940;font-weight:normal;white-space:pre;transform:scaleX(0.9914);transform-origin:left center;">04-10-2024</div>
<div style="position:absolute;left:400px;top:582.32px;font-size:21.0px;line-height:21.0px;color:#333940;font-weight:normal;white-space:pre;transform:scaleX(0.9700);transform-origin:left center;">001/YN</div>
<div style="position:absolute;left:580px;top:582.32px;font-size:21.0px;line-height:21.0px;color:#333940;font-weight:normal;white-space:pre;transform:scaleX(0.9714);transform-origin:left center;">World Beacon Bro...</div>
<div style="position:absolute;left:805px;top:582.32px;font-size:21.0px;line-height:21.0px;color:#333940;font-weight:normal;white-space:pre;transform:scaleX(1.0138);transform-origin:left center;">Divorce &amp; Dissolution</div>
<div style="position:absolute;left:1150px;top:582.32px;font-size:21.0px;line-height:21.0px;color:#333940;font-weight:normal;white-space:pre;transform:scaleX(0.9387);transform-origin:left center;">fax</div>
<div style="position:absolute;left:1315px;top:582.32px;font-size:21.0px;line-height:21.0px;color:#333940;font-weight:normal;white-space:pre;transform:scaleX(0.9693);transform-origin:left center;">Fax document</div>
<div style="position:absolute;left:1353.4px;width:400px;text-align:right;top:582.32px;font-size:21.0px;line-height:21.0px;color:#333940;font-weight:normal;white-space:pre;transform:scaleX(0.9700);transform-origin:right center;">1</div>
<div style="position:absolute;left:1513.4px;width:400px;text-align:right;top:582.32px;font-size:21.0px;line-height:21.0px;color:#8c8f93;font-weight:normal;white-space:pre;transform:scaleX(0.9136);transform-origin:right center;">0.1</div>
<div style="position:absolute;left:1672.4px;width:400px;text-align:right;top:582.32px;font-size:21.0px;line-height:21.0px;color:#333940;font-weight:normal;white-space:pre;transform:scaleX(0.9414);transform-origin:right center;">€639.50</div>
<div style="position:absolute;left:1832.3000000000002px;width:400px;text-align:right;top:582.32px;font-size:21.0px;line-height:21.0px;color:#8c8f93;font-weight:normal;white-space:pre;transform:scaleX(0.9410);transform-origin:right center;">€63.95</div>
<div style="position:absolute;left:0px;top:614px;width:71px;height:42px;background:#dfe0e4;"></div>
<div style="position:absolute;left:72px;top:614px;width:2167px;height:42px;background:#d7fbcf;"></div>
<div style="position:absolute;left:0px;top:656px;width:2239px;height:1px;background:#a9adb5;"></div>
<svg style="position:absolute;left:20.200000000000003px;top:621.1px;" width="28" height="28" viewBox="0 0 28 28" fill="none"><rect x="3.45" y="3.45" width="21.1" height="21.1" rx="4.8" stroke="#1e345c" stroke-width="1.9"/><path d="M9.3 19 L10.3 15.3 L17.8 7.8 Q19 6.6 20.2 7.8 Q21.4 9 20.2 10.2 L12.7 17.7 Z M10.3 15.3 L12.7 17.7" stroke="#36ace4" stroke-width="1.6" stroke-linejoin="round" fill="none"/></svg>
<div style="position:absolute;left:82px;top:625.82px;font-size:21.0px;line-height:21.0px;color:#333940;font-weight:normal;white-space:pre;transform:scaleX(0.9700);transform-origin:left center;">00:00:20</div>
<div style="position:absolute;left:241px;top:625.82px;font-size:21.0px;line-height:21.0px;color:#333940;font-weight:normal;white-space:pre;transform:scaleX(0.9914);transform-origin:left center;">04-10-2024</div>
<div style="position:absolute;left:400px;top:625.82px;font-size:21.0px;line-height:21.0px;color:#333940;font-weight:normal;white-space:pre;transform:scaleX(0.9700);transform-origin:left center;">001/YN</div>
<div style="position:absolute;left:580px;top:625.82px;font-size:21.0px;line-height:21.0px;color:#333940;font-weight:normal;white-space:pre;transform:scaleX(0.9714);transform-origin:left center;">World Beacon Bro...</div>
<div style="position:absolute;left:805px;top:625.82px;font-size:21.0px;line-height:21.0px;color:#333940;font-weight:normal;white-space:pre;transform:scaleX(1.0138);transform-origin:left center;">Divorce &amp; Dissolution</div>
<div style="position:absolute;left:1150px;top:625.82px;font-size:21.0px;line-height:21.0px;color:#333940;font-weight:normal;white-space:pre;">em</div>
<div style="position:absolute;left:1315px;top:625.82px;font-size:21.0px;line-height:21.0px;color:#333940;font-weight:normal;white-space:pre;transform:scaleX(0.9795);transform-origin:left center;">Email to World Beacon Brot...</div>
<div style="position:absolute;left:1353.4px;width:400px;text-align:right;top:625.82px;font-size:21.0px;line-height:21.0px;color:#333940;font-weight:normal;white-space:pre;transform:scaleX(0.9700);transform-origin:right center;">1</div>
<div style="position:absolute;left:1513.4px;width:400px;text-align:right;top:625.82px;font-size:21.0px;line-height:21.0px;color:#8c8f93;font-weight:normal;white-space:pre;transform:scaleX(0.9136);transform-origin:right center;">0.1</div>
<div style="position:absolute;left:1672.4px;width:400px;text-align:right;top:625.82px;font-size:21.0px;line-height:21.0px;color:#333940;font-weight:normal;white-space:pre;transform:scaleX(0.9414);transform-origin:right center;">€639.50</div>
<div style="position:absolute;left:1832.3000000000002px;width:400px;text-align:right;top:625.82px;font-size:21.0px;line-height:21.0px;color:#8c8f93;font-weight:normal;white-space:pre;transform:scaleX(0.9410);transform-origin:right center;">€63.95</div>
<div style="position:absolute;left:0px;top:656px;width:2239px;height:44px;background:#1e345c;"></div>
<div style="position:absolute;left:72px;top:659px;width:2167px;height:38px;background:#ffe3e1;"></div>
<svg style="position:absolute;left:20.200000000000003px;top:664.3px;" width="28" height="28" viewBox="0 0 28 28" fill="none"><rect x="3.45" y="3.45" width="21.1" height="21.1" rx="4.8" stroke="#ffffff" stroke-width="1.9"/><path d="M9.3 19 L10.3 15.3 L17.8 7.8 Q19 6.6 20.2 7.8 Q21.4 9 20.2 10.2 L12.7 17.7 Z M10.3 15.3 L12.7 17.7" stroke="#36ace4" stroke-width="1.6" stroke-linejoin="round" fill="none"/></svg>
<div style="position:absolute;left:82px;top:668.82px;font-size:21.0px;line-height:21.0px;color:#333940;font-weight:normal;white-space:pre;transform:scaleX(0.9700);transform-origin:left center;">00:00:14</div>
<div style="position:absolute;left:241px;top:668.82px;font-size:21.0px;line-height:21.0px;color:#333940;font-weight:normal;white-space:pre;transform:scaleX(0.9914);transform-origin:left center;">04-10-2024</div>
<div style="position:absolute;left:400px;top:668.82px;font-size:21.0px;line-height:21.0px;color:#333940;font-weight:normal;white-space:pre;transform:scaleX(0.9700);transform-origin:left center;">013/CS</div>
<div style="position:absolute;left:580px;top:668.82px;font-size:21.0px;line-height:21.0px;color:#333940;font-weight:normal;white-space:pre;transform:scaleX(0.9821);transform-origin:left center;">MAR Mus</div>
<div style="position:absolute;left:805px;top:668.82px;font-size:21.0px;line-height:21.0px;color:#333940;font-weight:normal;white-space:pre;transform:scaleX(0.9374);transform-origin:left center;">Purchase</div>
<div style="position:absolute;left:1150px;top:668.82px;font-size:21.0px;line-height:21.0px;color:#333940;font-weight:normal;white-space:pre;transform:scaleX(1.0784);transform-origin:left center;">bd</div>
<div style="position:absolute;left:1315px;top:668.82px;font-size:21.0px;line-height:21.0px;color:#333940;font-weight:normal;white-space:pre;transform:scaleX(0.9757);transform-origin:left center;">Business development</div>
<div style="position:absolute;left:1513.4px;width:400px;text-align:right;top:668.82px;font-size:21.0px;line-height:21.0px;color:#8c8f93;font-weight:normal;white-space:pre;transform:scaleX(0.9136);transform-origin:right center;">0.1</div>
<div style="position:absolute;left:1672.4px;width:400px;text-align:right;top:668.82px;font-size:21.0px;line-height:21.0px;color:#333940;font-weight:normal;white-space:pre;transform:scaleX(0.9414);transform-origin:right center;">€639.50</div>
<div style="position:absolute;left:1832.3000000000002px;width:400px;text-align:right;top:668.82px;font-size:21.0px;line-height:21.0px;color:#8c8f93;font-weight:normal;white-space:pre;transform:scaleX(0.9410);transform-origin:right center;">€63.95</div>
<div style="position:absolute;left:71px;top:274px;width:1px;height:382px;background:#a9adb5;"></div>
<div style="position:absolute;left:71px;top:700px;width:1px;height:0px;background:#a9adb5;"></div>
<div style="position:absolute;left:230px;top:274px;width:1px;height:382px;background:#a9adb5;"></div>
<div style="position:absolute;left:230px;top:700px;width:1px;height:0px;background:#a9adb5;"></div>
<div style="position:absolute;left:389px;top:274px;width:1px;height:382px;background:#a9adb5;"></div>
<div style="position:absolute;left:389px;top:700px;width:1px;height:0px;background:#a9adb5;"></div>
<div style="position:absolute;left:569px;top:274px;width:1px;height:382px;background:#a9adb5;"></div>
<div style="position:absolute;left:569px;top:700px;width:1px;height:0px;background:#a9adb5;"></div>
<div style="position:absolute;left:794px;top:274px;width:1px;height:382px;background:#a9adb5;"></div>
<div style="position:absolute;left:794px;top:700px;width:1px;height:0px;background:#a9adb5;"></div>
<div style="position:absolute;left:1139px;top:274px;width:1px;height:382px;background:#a9adb5;"></div>
<div style="position:absolute;left:1139px;top:700px;width:1px;height:0px;background:#a9adb5;"></div>
<div style="position:absolute;left:1304px;top:274px;width:1px;height:382px;background:#a9adb5;"></div>
<div style="position:absolute;left:1304px;top:700px;width:1px;height:0px;background:#a9adb5;"></div>
<div style="position:absolute;left:1604px;top:274px;width:1px;height:382px;background:#a9adb5;"></div>
<div style="position:absolute;left:1604px;top:700px;width:1px;height:0px;background:#a9adb5;"></div>
<div style="position:absolute;left:1763px;top:274px;width:1px;height:382px;background:#a9adb5;"></div>
<div style="position:absolute;left:1763px;top:700px;width:1px;height:0px;background:#a9adb5;"></div>
<div style="position:absolute;left:1923px;top:274px;width:1px;height:382px;background:#a9adb5;"></div>
<div style="position:absolute;left:1923px;top:700px;width:1px;height:0px;background:#a9adb5;"></div>
<div style="position:absolute;left:2082px;top:274px;width:1px;height:382px;background:#a9adb5;"></div>
<div style="position:absolute;left:2082px;top:700px;width:1px;height:0px;background:#a9adb5;"></div>
<div style="position:absolute;left:71px;top:700px;width:1px;height:254px;background:#a9adb5;"></div>
<div style="position:absolute;left:230px;top:659px;width:1px;height:38px;background:#a9adb5;"></div>
<div style="position:absolute;left:389px;top:659px;width:1px;height:38px;background:#a9adb5;"></div>
<div style="position:absolute;left:569px;top:659px;width:1px;height:38px;background:#a9adb5;"></div>
<div style="position:absolute;left:794px;top:659px;width:1px;height:38px;background:#a9adb5;"></div>
<div style="position:absolute;left:1139px;top:659px;width:1px;height:38px;background:#a9adb5;"></div>
<div style="position:absolute;left:1304px;top:659px;width:1px;height:38px;background:#a9adb5;"></div>
<div style="position:absolute;left:1604px;top:659px;width:1px;height:38px;background:#a9adb5;"></div>
<div style="position:absolute;left:1763px;top:659px;width:1px;height:38px;background:#a9adb5;"></div>
<div style="position:absolute;left:1923px;top:659px;width:1px;height:38px;background:#a9adb5;"></div>
<div style="position:absolute;left:2082px;top:659px;width:1px;height:38px;background:#a9adb5;"></div>
<div style="position:absolute;left:1604px;top:659px;width:159px;height:38px;background:#ffffff;box-shadow:0 0 8px 1px rgba(0,0,0,0.22);"></div>
<div style="position:absolute;left:1604px;top:656px;width:159px;height:3px;background:#1e345c;"></div>
<div style="position:absolute;left:1604px;top:697px;width:159px;height:3px;background:#1e345c;"></div>
<div style="position:absolute;left:1763px;top:659px;width:1px;height:38px;background:#a9adb5;"></div>
<div style="position:absolute;left:1604px;top:659px;width:1px;height:38px;background:#a9adb5;"></div>
<div style="position:absolute;left:1642.8px;width:100px;text-align:right;top:668.52px;font-size:21.0px;line-height:21.0px;color:#222;font-weight:normal;white-space:pre;transform:scaleX(0.9700);transform-origin:right center;">1</div>
<div style="position:absolute;left:0px;top:954px;width:2239px;height:1px;background:#a9adb5;"></div>
<div style="position:absolute;left:0px;top:955px;width:2239px;height:349px;background:#ffffff;"></div>
<div style="position:absolute;left:0px;top:955px;width:407px;height:49px;background:#f3f3f3;"></div>
<div style="position:absolute;left:0px;top:1004px;width:407px;height:1px;background:#a9adb5;"></div>
<div style="position:absolute;left:9.2px;top:968.54px;font-size:21.80232558139535px;line-height:21.80232558139535px;color:#3a3f45;font-weight:normal;white-space:pre;transform:scaleX(1.0164);transform-origin:left center;">Matter Summary</div>
<div style="position:absolute;left:8.9px;top:1021.37px;font-size:21.65697674418605px;line-height:21.65697674418605px;color:#5a5e63;font-weight:normal;white-space:pre;transform:scaleX(1.0388);transform-origin:left center;">Matter No:</div>
<div style="position:absolute;left:94px;width:300px;text-align:right;top:1021.37px;font-size:21.65697674418605px;line-height:21.65697674418605px;color:#33373c;font-weight:normal;white-space:pre;transform:scaleX(0.9723);transform-origin:right center;">013/CS</div>
<div style="position:absolute;left:8.9px;top:1056.37px;font-size:21.65697674418605px;line-height:21.65697674418605px;color:#5a5e63;font-weight:normal;white-space:pre;transform:scaleX(1.0529);transform-origin:left center;">Client:</div>
<div style="position:absolute;left:94px;width:300px;text-align:right;top:1056.37px;font-size:21.65697674418605px;line-height:21.65697674418605px;color:#33373c;font-weight:normal;white-space:pre;">MAR Mus</div>
<div style="position:absolute;left:8.9px;top:1091.37px;font-size:21.65697674418605px;line-height:21.65697674418605px;color:#5a5e63;font-weight:normal;white-space:pre;transform:scaleX(1.0245);transform-origin:left center;">Responsible:</div>
<div style="position:absolute;left:94px;width:300px;text-align:right;top:1091.37px;font-size:21.65697674418605px;line-height:21.65697674418605px;color:#33373c;font-weight:normal;white-space:pre;transform:scaleX(1.0216);transform-origin:right center;">Charmane Sutton</div>
<div style="position:absolute;left:8.9px;top:1143.97px;font-size:21.65697674418605px;line-height:21.65697674418605px;color:#5a5e63;font-weight:normal;white-space:pre;transform:scaleX(1.0205);transform-origin:left center;">WIP (Unbilled):</div>
<div style="position:absolute;left:94px;width:300px;text-align:right;top:1143.97px;font-size:21.65697674418605px;line-height:21.65697674418605px;color:#33373c;font-weight:normal;white-space:pre;transform:scaleX(1.0461);transform-origin:right center;">€259.20</div>
<div style="position:absolute;left:8.9px;top:1178.97px;font-size:21.65697674418605px;line-height:21.65697674418605px;color:#5a5e63;font-weight:normal;white-space:pre;transform:scaleX(1.0293);transform-origin:left center;">Debtor Balance:</div>
<div style="position:absolute;left:94px;width:300px;text-align:right;top:1178.97px;font-size:21.65697674418605px;line-height:21.65697674418605px;color:#33373c;font-weight:normal;white-space:pre;transform:scaleX(1.0483);transform-origin:right center;">€0.00</div>
<div style="position:absolute;left:8.9px;top:1213.97px;font-size:21.65697674418605px;line-height:21.65697674418605px;color:#5a5e63;font-weight:normal;white-space:pre;transform:scaleX(1.0238);transform-origin:left center;">Client Funds:</div>
<div style="position:absolute;left:94px;width:300px;text-align:right;top:1213.97px;font-size:21.65697674418605px;line-height:21.65697674418605px;color:#33373c;font-weight:normal;white-space:pre;transform:scaleX(1.0483);transform-origin:right center;">€0.00</div>
<div style="position:absolute;left:407px;top:955px;width:1px;height:349px;background:#a9adb5;"></div>
<div style="position:absolute;left:408px;top:955px;width:1424px;height:49px;background:#f3f3f3;"></div>
<div style="position:absolute;left:512px;top:955px;width:153px;height:48px;background:#e0e0e0;"></div>
<div style="position:absolute;left:418px;top:969.94px;font-size:21.80232558139535px;line-height:21.80232558139535px;color:#75787c;font-weight:normal;white-space:pre;transform:scaleX(0.9812);transform-origin:left center;">Activities</div>
<div style="position:absolute;left:522.6px;top:969.94px;font-size:21.80232558139535px;line-height:21.80232558139535px;color:#33373c;font-weight:normal;white-space:pre;transform:scaleX(0.9770);transform-origin:left center;">Matter Entries</div>
<div style="position:absolute;left:408px;top:1004px;width:1424px;height:1px;background:#a9adb5;"></div>
<div style="position:absolute;left:408px;top:1005px;width:1424px;height:33px;background:#e1e1e1;"></div>
<div style="position:absolute;left:408px;top:1038px;width:1399px;height:1px;background:#a9adb5;"></div>
<div style="position:absolute;left:418px;top:1013.51px;font-size:19.476744186046513px;line-height:19.476744186046513px;color:#3b4046;font-weight:normal;white-space:pre;-webkit-text-stroke:0.25px #3b4046;transform:scaleX(0.9605);transform-origin:left center;">Description</div>
<div style="position:absolute;left:1375px;top:1013.51px;font-size:19.476744186046513px;line-height:19.476744186046513px;color:#3b4046;font-weight:normal;white-space:pre;-webkit-text-stroke:0.25px #3b4046;transform:scaleX(0.9247);transform-origin:left center;">Date</div>
<div style="position:absolute;left:1595.5px;top:1013.51px;font-size:19.476744186046513px;line-height:19.476744186046513px;color:#3b4046;font-weight:normal;white-space:pre;-webkit-text-stroke:0.25px #3b4046;transform:scaleX(0.8891);transform-origin:left center;">Staff</div>
<svg style="position:absolute;left:1553px;top:1015px;" width="16" height="14" viewBox="0 0 16 14" fill="none"><path d="M3 4.6 L12 4.6 L7.5 9.6 Z" fill="#555"/></svg>
<div style="position:absolute;left:1364px;top:1005px;width:1px;height:299px;background:#a9adb5;"></div>
<div style="position:absolute;left:1585px;top:1005px;width:1px;height:299px;background:#a9adb5;"></div>
<div style="position:absolute;left:1805px;top:1005px;width:1px;height:299px;background:#a9adb5;"></div>
<div style="position:absolute;left:408px;top:1083px;width:1399px;height:1px;background:#a9adb5;"></div>
<svg style="position:absolute;left:420px;top:1045px;" width="30" height="30" viewBox="0 0 30 30" fill="none"><rect x="3.5" y="6.5" width="22.8" height="17.4" rx="1.3" stroke="#8f8f8f" stroke-width="1.4"/><rect x="4.2" y="7.2" width="21.4" height="3.2" fill="#dedede"/><path d="M3.5 10.6 L26.3 10.6" stroke="#8f8f8f" stroke-width="1.2"/><path d="M9.3 4.4 L9.3 8.2 M20.7 4.4 L20.7 8.2" stroke="#8f8f8f" stroke-width="1.2"/><rect x="7.5" y="13.2" width="15" height="8" fill="#ececec" stroke="#b0b0b0" stroke-width="1"/><rect x="8.6" y="14.2" width="2.8" height="2.4" fill="#1a5fd0"/><rect x="12.2" y="14.2" width="2.6" height="2.4" fill="#b8b8b8"/><circle cx="20.4" cy="21.1" r="6.4" fill="#1a5ac8"/><path d="M20 17.4 L20 21.7 L24.2 21.7" stroke="#fff" stroke-width="1.8" fill="none"/></svg>
<div style="position:absolute;left:456.7px;top:1051.59px;font-size:21.51162790697675px;line-height:21.51162790697675px;color:#33373c;font-weight:normal;white-space:pre;transform:scaleX(0.9343);transform-origin:left center;">Reviewing LEAP(Test)-240117-155424</div>
<div style="position:absolute;left:1269.5px;width:300px;text-align:right;top:1051.59px;font-size:21.51162790697675px;line-height:21.51162790697675px;color:#33373c;font-weight:normal;white-space:pre;transform:scaleX(0.9946);transform-origin:right center;">18/01/2024</div>
<div style="position:absolute;left:1690px;width:100px;text-align:right;top:1051.59px;font-size:21.51162790697675px;line-height:21.51162790697675px;color:#33373c;font-weight:normal;white-space:pre;transform:scaleX(0.8096);transform-origin:right center;">CS</div>
<div style="position:absolute;left:408px;top:1126px;width:1399px;height:1px;background:#a9adb5;"></div>
<svg style="position:absolute;left:420px;top:1088px;" width="30" height="30" viewBox="0 0 30 30" fill="none"><rect x="3.5" y="6.5" width="22.8" height="17.4" rx="1.3" stroke="#8f8f8f" stroke-width="1.4"/><rect x="4.2" y="7.2" width="21.4" height="3.2" fill="#dedede"/><path d="M3.5 10.6 L26.3 10.6" stroke="#8f8f8f" stroke-width="1.2"/><path d="M9.3 4.4 L9.3 8.2 M20.7 4.4 L20.7 8.2" stroke="#8f8f8f" stroke-width="1.2"/><rect x="7.5" y="13.2" width="15" height="8" fill="#ececec" stroke="#b0b0b0" stroke-width="1"/><rect x="8.6" y="14.2" width="2.8" height="2.4" fill="#1a5fd0"/><rect x="12.2" y="14.2" width="2.6" height="2.4" fill="#b8b8b8"/><circle cx="20.4" cy="21.1" r="6.4" fill="#1a5ac8"/><path d="M20 17.4 L20 21.7 L24.2 21.7" stroke="#fff" stroke-width="1.8" fill="none"/></svg>
<div style="position:absolute;left:456.7px;top:1094.59px;font-size:21.51162790697675px;line-height:21.51162790697675px;color:#33373c;font-weight:normal;white-space:pre;transform:scaleX(0.9396);transform-origin:left center;">Scanning LEAP(Test)-240117-155424.pdf</div>
<div style="position:absolute;left:1269.5px;width:300px;text-align:right;top:1094.59px;font-size:21.51162790697675px;line-height:21.51162790697675px;color:#33373c;font-weight:normal;white-space:pre;transform:scaleX(0.9946);transform-origin:right center;">17/01/2024</div>
<div style="position:absolute;left:1690px;width:100px;text-align:right;top:1094.59px;font-size:21.51162790697675px;line-height:21.51162790697675px;color:#33373c;font-weight:normal;white-space:pre;transform:scaleX(0.8096);transform-origin:right center;">CS</div>
<div style="position:absolute;left:408px;top:1170px;width:1399px;height:1px;background:#a9adb5;"></div>
<svg style="position:absolute;left:420px;top:1132px;" width="30" height="30" viewBox="0 0 30 30" fill="none"><rect x="3.5" y="6.5" width="22.8" height="17.4" rx="1.3" stroke="#8f8f8f" stroke-width="1.4"/><rect x="4.2" y="7.2" width="21.4" height="3.2" fill="#dedede"/><path d="M3.5 10.6 L26.3 10.6" stroke="#8f8f8f" stroke-width="1.2"/><path d="M9.3 4.4 L9.3 8.2 M20.7 4.4 L20.7 8.2" stroke="#8f8f8f" stroke-width="1.2"/><rect x="7.5" y="13.2" width="15" height="8" fill="#ececec" stroke="#b0b0b0" stroke-width="1"/><rect x="8.6" y="14.2" width="2.8" height="2.4" fill="#1a5fd0"/><rect x="12.2" y="14.2" width="2.6" height="2.4" fill="#b8b8b8"/><circle cx="20.4" cy="21.1" r="6.4" fill="#1a5ac8"/><path d="M20 17.4 L20 21.7 L24.2 21.7" stroke="#fff" stroke-width="1.8" fill="none"/></svg>
<div style="position:absolute;left:456.7px;top:1138.59px;font-size:21.51162790697675px;line-height:21.51162790697675px;color:#33373c;font-weight:normal;white-space:pre;transform:scaleX(0.9396);transform-origin:left center;">Scanning LEAP(Test)-240117-155359.pdf</div>
<div style="position:absolute;left:1269.5px;width:300px;text-align:right;top:1138.59px;font-size:21.51162790697675px;line-height:21.51162790697675px;color:#33373c;font-weight:normal;white-space:pre;transform:scaleX(0.9946);transform-origin:right center;">17/01/2024</div>
<div style="position:absolute;left:1690px;width:100px;text-align:right;top:1138.59px;font-size:21.51162790697675px;line-height:21.51162790697675px;color:#33373c;font-weight:normal;white-space:pre;transform:scaleX(0.8096);transform-origin:right center;">CS</div>
<div style="position:absolute;left:408px;top:1213px;width:1399px;height:1px;background:#a9adb5;"></div>
<svg style="position:absolute;left:420px;top:1175px;" width="30" height="30" viewBox="0 0 30 30" fill="none"><rect x="3.5" y="6.5" width="22.8" height="17.4" rx="1.3" stroke="#8f8f8f" stroke-width="1.4"/><rect x="4.2" y="7.2" width="21.4" height="3.2" fill="#dedede"/><path d="M3.5 10.6 L26.3 10.6" stroke="#8f8f8f" stroke-width="1.2"/><path d="M9.3 4.4 L9.3 8.2 M20.7 4.4 L20.7 8.2" stroke="#8f8f8f" stroke-width="1.2"/><rect x="7.5" y="13.2" width="15" height="8" fill="#ececec" stroke="#b0b0b0" stroke-width="1"/><rect x="8.6" y="14.2" width="2.8" height="2.4" fill="#1a5fd0"/><rect x="12.2" y="14.2" width="2.6" height="2.4" fill="#b8b8b8"/><circle cx="20.4" cy="21.1" r="6.4" fill="#1a5ac8"/><path d="M20 17.4 L20 21.7 L24.2 21.7" stroke="#fff" stroke-width="1.8" fill="none"/></svg>
<div style="position:absolute;left:456.7px;top:1181.59px;font-size:21.51162790697675px;line-height:21.51162790697675px;color:#33373c;font-weight:normal;white-space:pre;transform:scaleX(0.9624);transform-origin:left center;">Phone call with null (0297789199)</div>
<div style="position:absolute;left:1269.5px;width:300px;text-align:right;top:1181.59px;font-size:21.51162790697675px;line-height:21.51162790697675px;color:#33373c;font-weight:normal;white-space:pre;transform:scaleX(0.9946);transform-origin:right center;">17/01/2024</div>
<div style="position:absolute;left:1690px;width:100px;text-align:right;top:1181.59px;font-size:21.51162790697675px;line-height:21.51162790697675px;color:#33373c;font-weight:normal;white-space:pre;transform:scaleX(0.8096);transform-origin:right center;">CS</div>
<div style="position:absolute;left:408px;top:1257px;width:1399px;height:1px;background:#a9adb5;"></div>
<svg style="position:absolute;left:420px;top:1219px;" width="30" height="30" viewBox="0 0 30 30" fill="none"><rect x="3.5" y="6.5" width="22.8" height="17.4" rx="1.3" stroke="#8f8f8f" stroke-width="1.4"/><rect x="4.2" y="7.2" width="21.4" height="3.2" fill="#dedede"/><path d="M3.5 10.6 L26.3 10.6" stroke="#8f8f8f" stroke-width="1.2"/><path d="M9.3 4.4 L9.3 8.2 M20.7 4.4 L20.7 8.2" stroke="#8f8f8f" stroke-width="1.2"/><rect x="7.5" y="13.2" width="15" height="8" fill="#ececec" stroke="#b0b0b0" stroke-width="1"/><rect x="8.6" y="14.2" width="2.8" height="2.4" fill="#1a5fd0"/><rect x="12.2" y="14.2" width="2.6" height="2.4" fill="#b8b8b8"/><circle cx="20.4" cy="21.1" r="6.4" fill="#1a5ac8"/><path d="M20 17.4 L20 21.7 L24.2 21.7" stroke="#fff" stroke-width="1.8" fill="none"/></svg>
<div style="position:absolute;left:456.7px;top:1225.59px;font-size:21.51162790697675px;line-height:21.51162790697675px;color:#33373c;font-weight:normal;white-space:pre;transform:scaleX(0.9462);transform-origin:left center;">SMS to 0410851260</div>
<div style="position:absolute;left:1269.5px;width:300px;text-align:right;top:1225.59px;font-size:21.51162790697675px;line-height:21.51162790697675px;color:#33373c;font-weight:normal;white-space:pre;transform:scaleX(0.9946);transform-origin:right center;">17/01/2024</div>
<div style="position:absolute;left:1690px;width:100px;text-align:right;top:1225.59px;font-size:21.51162790697675px;line-height:21.51162790697675px;color:#33373c;font-weight:normal;white-space:pre;transform:scaleX(0.8096);transform-origin:right center;">CS</div>
<div style="position:absolute;left:408px;top:1300px;width:1399px;height:1px;background:#a9adb5;"></div>
<svg style="position:absolute;left:420px;top:1262px;" width="30" height="30" viewBox="0 0 30 30" fill="none"><rect x="3.5" y="6.5" width="22.8" height="17.4" rx="1.3" stroke="#8f8f8f" stroke-width="1.4"/><rect x="4.2" y="7.2" width="21.4" height="3.2" fill="#dedede"/><path d="M3.5 10.6 L26.3 10.6" stroke="#8f8f8f" stroke-width="1.2"/><path d="M9.3 4.4 L9.3 8.2 M20.7 4.4 L20.7 8.2" stroke="#8f8f8f" stroke-width="1.2"/><rect x="7.5" y="13.2" width="15" height="8" fill="#ececec" stroke="#b0b0b0" stroke-width="1"/><rect x="8.6" y="14.2" width="2.8" height="2.4" fill="#1a5fd0"/><rect x="12.2" y="14.2" width="2.6" height="2.4" fill="#b8b8b8"/><circle cx="20.4" cy="21.1" r="6.4" fill="#1a5ac8"/><path d="M20 17.4 L20 21.7 L24.2 21.7" stroke="#fff" stroke-width="1.8" fill="none"/></svg>
<div style="position:absolute;left:456.7px;top:1268.59px;font-size:21.51162790697675px;line-height:21.51162790697675px;color:#33373c;font-weight:normal;white-space:pre;transform:scaleX(0.9428);transform-origin:left center;">Phone Call MAR Mus (0297789199)</div>
<div style="position:absolute;left:1269.5px;width:300px;text-align:right;top:1268.59px;font-size:21.51162790697675px;line-height:21.51162790697675px;color:#33373c;font-weight:normal;white-space:pre;transform:scaleX(0.9946);transform-origin:right center;">17/01/2024</div>
<div style="position:absolute;left:1690px;width:100px;text-align:right;top:1268.59px;font-size:21.51162790697675px;line-height:21.51162790697675px;color:#33373c;font-weight:normal;white-space:pre;transform:scaleX(0.8096);transform-origin:right center;">CS</div>
<div style="position:absolute;left:1806px;top:1039px;width:26px;height:265px;background:#f0f0f0;"></div>
<div style="position:absolute;left:1809px;top:1064px;width:21px;height:131px;background:#c2c2c2;"></div>
<svg style="position:absolute;left:1811px;top:1045px;" width="16" height="12" viewBox="0 0 16 12" fill="none"><path d="M2.5 9 L13 9 L7.75 3.5 Z" fill="#9a9a9a"/></svg>
<svg style="position:absolute;left:1811px;top:1292px;" width="16" height="12" viewBox="0 0 16 12" fill="none"><path d="M2.5 3 L13 3 L7.75 8.5 Z" fill="#555"/></svg>
<div style="position:absolute;left:1832px;top:955px;width:1px;height:349px;background:#a9adb5;"></div>
<div style="position:absolute;left:1833px;top:955px;width:406px;height:49px;background:#f3f3f3;"></div>
<div style="position:absolute;left:1833px;top:1004px;width:406px;height:1px;background:#a9adb5;"></div>
<div style="position:absolute;left:1845.7px;top:968.84px;font-size:21.80232558139535px;line-height:21.80232558139535px;color:#3a3f45;font-weight:normal;white-space:pre;transform:scaleX(1.0318);transform-origin:left center;">Performance</div>
<div style="position:absolute;left:1916px;top:1005px;width:71px;height:33px;background:#e0e0e0;"></div>
<div style="position:absolute;left:1843.7px;top:1011.54px;font-size:21.80232558139535px;line-height:21.80232558139535px;color:#75787c;font-weight:normal;white-space:pre;transform:scaleX(0.9626);transform-origin:left center;">Details</div>
<div style="position:absolute;left:1926.6px;top:1011.54px;font-size:21.80232558139535px;line-height:21.80232558139535px;color:#222;font-weight:normal;white-space:pre;transform:scaleX(0.9601);transform-origin:left center;">Chart</div>
<div style="position:absolute;left:1833px;top:1038px;width:406px;height:1px;background:#a9adb5;"></div>
<div style="position:absolute;left:1881px;top:1053px;width:18px;height:18px;background:#3eaa2a;"></div>
<div style="position:absolute;left:2004px;top:1053px;width:18px;height:18px;background:#f58f35;"></div>
<div style="position:absolute;left:2095px;top:1053px;width:18px;height:18px;background:#0a5fad;"></div>
<div style="position:absolute;left:1905px;top:1053.18px;font-size:19.040697674418606px;line-height:19.040697674418606px;color:#5a5e63;font-weight:normal;white-space:pre;">Exceeded</div>
<div style="position:absolute;left:2028.8px;top:1053.18px;font-size:19.040697674418606px;line-height:19.040697674418606px;color:#5a5e63;font-weight:normal;white-space:pre;transform:scaleX(0.9950);transform-origin:left center;">Under</div>
<div style="position:absolute;left:2119px;top:1053.18px;font-size:19.040697674418606px;line-height:19.040697674418606px;color:#5a5e63;font-weight:normal;white-space:pre;transform:scaleX(1.0103);transform-origin:left center;">Budget</div>
<div style="position:absolute;left:1923px;top:1106px;width:275px;height:1px;background:#d0d0d0;"></div>
<div style="position:absolute;left:1923px;top:1176px;width:275px;height:1px;background:#d0d0d0;"></div>
<div style="position:absolute;left:1968.5px;top:1106px;width:1px;height:140px;background:#d0d0d0;"></div>
<div style="position:absolute;left:2060px;top:1106px;width:1px;height:140px;background:#d0d0d0;"></div>
<div style="position:absolute;left:2151.5px;top:1106px;width:1px;height:140px;background:#d0d0d0;"></div>
<div style="position:absolute;left:2197px;top:1106px;width:1px;height:140px;background:#d0d0d0;"></div>
<div style="position:absolute;left:1923px;top:1106px;width:1.5px;height:141px;background:#777;"></div>
<div style="position:absolute;left:1923px;top:1245px;width:275px;height:1.5px;background:#777;"></div>
<div style="position:absolute;left:1941px;top:1112px;width:21px;height:133.5px;background:#3eaa2a;"></div>
<div style="position:absolute;left:2032.7px;top:1112px;width:21px;height:133.5px;background:#3eaa2a;"></div>
<div style="position:absolute;left:2124.3px;top:1112px;width:21px;height:133.5px;background:#3eaa2a;"></div>
<div style="position:absolute;left:1803.7px;width:100px;text-align:right;top:1097.94px;font-size:18.502824858757062px;line-height:18.502824858757062px;color:#5a5e63;font-weight:normal;white-space:pre;transform:scaleX(1.0630);transform-origin:right center;">900</div>
<div style="position:absolute;left:1803.7px;width:100px;text-align:right;top:1167.74px;font-size:18.502824858757062px;line-height:18.502824858757062px;color:#5a5e63;font-weight:normal;white-space:pre;transform:scaleX(1.0452);transform-origin:right center;">450</div>
<div style="position:absolute;left:1803.7px;width:100px;text-align:right;top:1236.14px;font-size:18.502824858757062px;line-height:18.502824858757062px;color:#5a5e63;font-weight:normal;white-space:pre;transform:scaleX(0.8925);transform-origin:right center;">0</div>
<div style="position:absolute;left:1841px;top:1168.16px;font-size:18px;line-height:18px;color:#5a5e63;font-weight:normal;white-space:pre;">€</div>
<div style="position:absolute;left:1868.8px;width:200px;text-align:center;top:1254.68px;font-size:19.040697674418606px;line-height:19.040697674418606px;color:#5a5e63;font-weight:normal;white-space:pre;transform:scaleX(0.9767);transform-origin:center center;">Today</div>
<div style="position:absolute;left:1960.5px;width:200px;text-align:center;top:1254.68px;font-size:19.040697674418606px;line-height:19.040697674418606px;color:#5a5e63;font-weight:normal;white-space:pre;transform:scaleX(0.9473);transform-origin:center center;">WTD</div>
<div style="position:absolute;left:2051.9px;width:200px;text-align:center;top:1254.68px;font-size:19.040697674418606px;line-height:19.040697674418606px;color:#5a5e63;font-weight:normal;white-space:pre;">MTD</div>
</body></html>
